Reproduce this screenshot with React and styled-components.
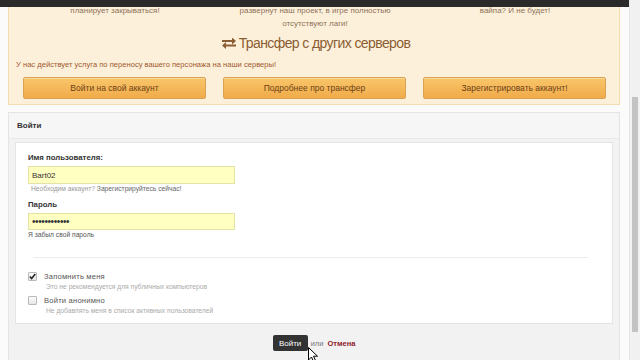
import React from "react";
import styled, { createGlobalStyle } from "styled-components";

const GlobalStyle = createGlobalStyle`
  html, body {
    margin: 0;
    padding: 0;
    background: #fbfbfb;
    font-family: "Liberation Sans", Arial, sans-serif;
    overflow: hidden;
  }
`;

const Screen = styled.div`
  position: relative;
  display: flex;
  width: 640px;
  height: 360px;
  overflow: hidden;
`;

const Main = styled.div`
  flex: 1;
  padding: 0 9px 0 8px;
`;

const TopBar = styled.div`
  position: absolute;
  top: 0;
  left: 0;
  width: 629px;
  height: 7px;
  background: #2a2a2a;
`;

const Scrollbar = styled.div`
  width: 11px;
  background: #f1f1f1;
  border-left: 1px solid #e6e6e6;
  padding-top: 97px;
  box-sizing: border-box;
`;

const Thumb = styled.div`
  width: 6px;
  height: 235px;
  margin-left: 2px;
  background: #c3c3c3;
`;

const Promo = styled.div`
  background: #fdf0da;
  border: 1px solid #f4dcb0;
  border-top: none;
  padding: 4px 13px 5px;
`;

const Columns = styled.div`
  margin: 0 -9px 0 -7px;
  display: grid;
  grid-template-columns: repeat(3, 1fr);
  font-size: 8px;
  line-height: 13px;
  color: #8d735a;
  text-align: center;
`;

const Heading = styled.div`
  margin-top: 4px;
  padding-left: 4px;
  display: flex;
  align-items: center;
  justify-content: center;
  gap: 3px;
  font-size: 14px;
  letter-spacing: -0.6px;
  line-height: 18px;
  color: #8a5d33;
`;

const Note = styled.div`
  margin: 7px 0 0 -6px;
  font-size: 7.6px;
  line-height: 11px;
  color: #a0582f;
`;

const ButtonRow = styled.div`
  margin-top: 7px;
  display: grid;
  grid-template-columns: repeat(3, 1fr);
  gap: 17px;
  padding: 0 0 0 1px;
`;

const PromoButton = styled.div`
  height: 22px;
  box-sizing: border-box;
  display: flex;
  align-items: center;
  justify-content: center;
  background: linear-gradient(#f8c66a, #f1ab4a);
  border: 1px solid #dca152;
  border-radius: 2px;
  box-shadow: inset 0 1px 0 rgba(255, 255, 255, 0.35);
  font-size: 8.5px;
  color: #6e4116;
`;

const LoginBlock = styled.div`
  margin-top: 7px;
  background: #f2f2f2;
  border: 1px solid #e4e4e4;
  height: 260px;
`;

const BlockHeader = styled.div`
  height: 25px;
  display: flex;
  align-items: center;
  padding-left: 8px;
  background: #f6f6f6;
  border-bottom: 1px solid #e9e9e9;
  font-size: 8px;
  font-weight: bold;
  color: #333;
`;

const FormBox = styled.div`
  margin: 3px 6px 0;
  background: #fff;
  border: 1px solid #e4e4e4;
  padding: 9px 12px 8px;
`;

const Label = styled.div`
  font-size: 7.8px;
  font-weight: bold;
  line-height: 12px;
  color: #333;
  margin-top: ${({ $gap }) => $gap || 0}px;
`;

const Input = styled.div`
  margin-top: 2px;
  width: 207px;
  height: ${({ $h }) => $h}px;
  box-sizing: border-box;
  background: #ffffc2;
  border: 1px solid #e3e3a6;
  display: flex;
  align-items: center;
  padding-left: 3px;
  font-size: ${({ $dots }) => ($dots ? "10px" : "8px")};
  color: #333;
  letter-spacing: ${({ $dots }) => ($dots ? "-0.4px" : "0")};
`;

const Hint = styled.div`
  font-size: 6.7px;
  line-height: 10px;
  color: ${({ $dark }) => ($dark ? "#555" : "#999")};
  padding-left: ${({ $indent }) => $indent || 0}px;
  span {
    color: #666;
  }
`;

const Separator = styled.div`
  margin: 17px 12px 0 5px;
  height: 1px;
  background: #ececec;
`;

const CheckRow = styled.div`
  display: flex;
  gap: 7px;
  margin-top: ${({ $gap }) => $gap}px;
`;

const Box = styled.div`
  width: 9px;
  height: 9px;
  margin-top: 1px;
  box-sizing: border-box;
  border: 1px solid #b9b9b9;
  border-radius: 1px;
  background: linear-gradient(#fdfdfd, #e6e6e6);
  display: flex;
  align-items: center;
  justify-content: center;
`;

const CheckText = styled.div`
  display: flex;
  flex-direction: column;
`;

const CheckTitle = styled.div`
  font-size: 7.6px;
  line-height: 11px;
  color: #555;
  letter-spacing: 0.2px;
`;

const CheckHint = styled.div`
  font-size: 6.7px;
  line-height: 9px;
  color: #aaa;
  padding-left: 2px;
`;

const Footer = styled.div`
  position: relative;
  margin: 0 6px;
  padding-top: 11px;
  display: flex;
  justify-content: center;
  align-items: center;
  font-size: 7.5px;
`;

const SubmitButton = styled.div`
  height: 16px;
  width: 35px;
  display: flex;
  align-items: center;
  justify-content: center;
  background: #333;
  border-radius: 2px;
  color: #fff;
  font-size: 8px;
  margin-right: 3px;
`;

const Or = styled.span`
  color: #777;
  margin-right: 4px;
`;

const Cancel = styled.span`
  color: #8e1c2a;
  font-weight: bold;
`;

const Cursor = styled.svg`
  position: absolute;
  left: 293px;
  top: 23px;
`;

const ExchangeIcon = () => (
  <svg width="14" height="11" viewBox="0 0 14 11">
    <path d="M0 2h10V-0.5l4 3.5-4 3.5V4H0z" fill="#8a5d33" />
    <path d="M14 8.5H4V11L0 7.5 4 4v2.5h10z" fill="#8a5d33" />
  </svg>
);

const Check = () => (
  <svg width="7" height="7" viewBox="0 0 7 7">
    <path d="M0.8 3.6l1.8 1.9L6.3 1" stroke="#222" strokeWidth="1.5" fill="none" />
  </svg>
);

export default function App() {
  return (
    <Screen>
      <GlobalStyle />
      <TopBar />
      <Main>
        <Promo>
          <Columns>
            <div>планирует закрываться!</div>
            <div>
              развернут наш проект, в игре полностью
              <br />
              отсутствуют лаги!
            </div>
            <div>вайпа? И не будет!</div>
          </Columns>
          <Heading>
            <ExchangeIcon />
            Трансфер с других серверов
          </Heading>
          <Note>
            У нас действует услуга по переносу вашего персонажа на наши серверы!
          </Note>
          <ButtonRow>
            <PromoButton>Войти на свой аккаунт</PromoButton>
            <PromoButton>Подробнее про трансфер</PromoButton>
            <PromoButton>Зарегистрировать аккаунт!</PromoButton>
          </ButtonRow>
        </Promo>

        <LoginBlock>
          <BlockHeader>Войти</BlockHeader>
          <FormBox>
            <Label>Имя пользователя:</Label>
            <Input $h={18}>Bart02</Input>
            <Hint $indent={3}>
              Необходим аккаунт? <span>Зарегистрируйтесь сейчас!</span>
            </Hint>
            <Label $gap={5}>Пароль</Label>
            <Input $h={17} $dots>
              ••••••••••••
            </Input>
            <Hint $dark>Я забыл свой пароль</Hint>
            <Separator />
            <CheckRow $gap={13}>
              <Box>
                <Check />
              </Box>
              <CheckText>
                <CheckTitle>Запомнить меня</CheckTitle>
                <CheckHint>Это не рекомендуется для публичных компьютеров</CheckHint>
              </CheckText>
            </CheckRow>
            <CheckRow $gap={4}>
              <Box />
              <CheckText>
                <CheckTitle>Войти анонимно</CheckTitle>
                <CheckHint>Не добавлять меня в список активных пользователей</CheckHint>
              </CheckText>
            </CheckRow>
          </FormBox>
          <Footer>
            <SubmitButton>Войти</SubmitButton>
            <Or>или</Or>
            <Cancel>Отмена</Cancel>
            <Cursor width="10" height="16" viewBox="0 0 10 16">
              <path
                d="M0.5 0.5v12.5l3-3 2 4.5 2-1-2-4.3h4z"
                fill="#fff"
                stroke="#000"
                strokeWidth="1"
                strokeLinejoin="round"
              />
            </Cursor>
          </Footer>
        </LoginBlock>
      </Main>
      <Scrollbar>
        <Thumb />
      </Scrollbar>
    </Screen>
  );
}
